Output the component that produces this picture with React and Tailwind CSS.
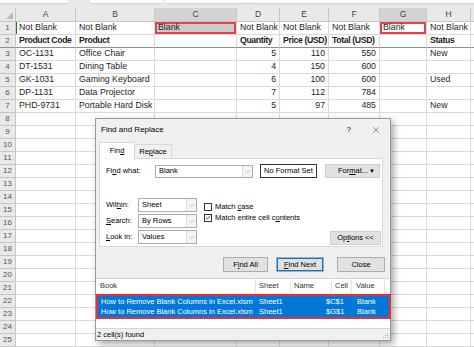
import React from 'react';
import { X, ChevronDown } from 'lucide-react';

const LETTERS = ['A', 'B', 'C', 'D', 'E', 'F', 'G', 'H', ''];

const DATA = [
  ['Not Blank', 'Not Blank', 'Blank', 'Not Blank', 'Not Blank', 'Not Blank', 'Blank', 'Not Blank'],
  ['Product Code', 'Product', '', 'Quantity', 'Price (USD)', 'Total (USD)', '', 'Status'],
  ['OC-1131', 'Office Chair', '', '5', '110', '550', '', 'New'],
  ['DT-1531', 'Dining Table', '', '4', '150', '600', '', ''],
  ['GK-1031', 'Gaming Keyboard', '', '6', '100', '600', '', 'Used'],
  ['DP-1131', 'Data Projector', '', '7', '112', '784', '', ''],
  ['PHD-9731', 'Portable Hard Disk', '', '5', '97', '485', '', 'New'],
];

const rows = Array.from({ length: 25 }, (_, i) => DATA[i] || []);

const Btn = ({ className = '', children }) => (
  <div className={`h-[15px] bg-[#e1e1e1] border border-[#adadad] flex items-center justify-center ${className}`}>
    {children}
  </div>
);

const Select = ({ value }) => (
  <div className="w-[59px] h-[14px] border border-[#abadb3] bg-white flex items-center">
    <span className="pl-[3px] flex-1">{value}</span>
    <div className="w-[10px] h-full border-l border-[#dcdcdc] bg-[#f4f4f4] flex items-center justify-center">
      <ChevronDown size={7} strokeWidth={1.5} color="#777" />
    </div>
  </div>
);

const Check = ({ checked }) => (
  <div className="w-[8px] h-[8px] border border-[#333] bg-white flex items-center justify-center">
    {checked && (
      <svg width="7" height="7" viewBox="0 0 8 8">
        <path d="M1 4.2 L3.1 6.2 L7 1.6" fill="none" stroke="#222" strokeWidth="1" />
      </svg>
    )}
  </div>
);

const Sheet = () => (
  <div className="w-full">
    {/* name box / formula bar remnants */}
    <div className="h-[8px] bg-[#e9e9e9] flex items-start">
      <div className="w-[68px] h-[4px] bg-white border-b border-[#d0d0d0]"></div>
      <div className="w-[73px] h-[4px] bg-white border-b border-[#d0d0d0] ml-[22px]"></div>
      <div className="flex-1 h-[4px] bg-white border-b border-[#d0d0d0] ml-[3px]"></div>
    </div>

    <div className="grid grid-cols-[16px_60px_79px_82px_43px_49px_51px_47px_44px_1fr]">
      {/* column headers */}
      <div className="h-[14px] bg-[#e9e9e9] border-r border-b border-[#c6c6c6] flex items-end justify-end pr-[2px] pb-[2px]">
        <svg width="7" height="7" viewBox="0 0 7 7">
          <path d="M7 0 L7 7 L0 7 Z" fill="#b8b8b8" />
        </svg>
      </div>
      {LETTERS.map((l, i) => (
        <div
          key={i}
          className={`h-[14px] border-r border-b border-[#c6c6c6] flex items-center justify-center text-[8.5px] text-[#444] ${
            l === 'C' || l === 'G' ? 'bg-[#d3d3d3]' : 'bg-[#e9e9e9]'
          }`}
        >
          {l}
        </div>
      ))}

      {rows.map((r, ri) => {
        const rowNum = ri + 1;
        const freeze = rowNum === 2 ? 'border-b-[#8f8f8f]' : '';
        return (
          <React.Fragment key={ri}>
            <div className={`h-[13px] bg-[#e9e9e9] border-r border-b border-[#c6c6c6] flex items-center justify-center text-[8px] text-[#555] ${freeze}`}>
              {rowNum}
            </div>
            {Array.from({ length: 9 }, (_, ci) => {
              const v = r[ci] || '';
              const numeric = ci >= 3 && ci <= 5 && rowNum >= 3;
              const bold = rowNum === 2;
              let extra = '';
              if (rowNum === 1 && ci === 2) extra = 'bg-[#cbcbcb] shadow-[inset_0_0_0_2px_#e8404a]';
              if (rowNum === 1 && ci === 6) extra = 'shadow-[inset_0_0_0_2px_#e8404a]';
              if (rowNum === 1 && ci === 0) extra = 'shadow-[inset_1px_0_0_0_#217346]';
              return (
                <div
                  key={ci}
                  className={`h-[13px] border-r border-b border-[#dadada] flex items-center overflow-hidden whitespace-nowrap text-[8.75px] text-[#1e1e1e] ${
                    numeric ? 'justify-end pr-[3px]' : 'pl-[3px]'
                  } ${bold ? 'font-bold tracking-[-0.4px]' : ''} ${freeze} ${extra}`}
                >
                  {v}
                </div>
              );
            })}
          </React.Fragment>
        );
      })}
    </div>
  </div>
);

const Dialog = () => (
  <div className="absolute left-[95px] top-[118px] w-[296px] h-[223px] bg-[#f0f0f0] border border-[#9a9a9a] shadow-[3px_3px_7px_rgba(0,0,0,0.35)] flex flex-col text-[7.5px] text-black">
    {/* title bar */}
    <div className="h-[22px] shrink-0 flex items-center pl-[5px] pr-[9px]">
      <span className="text-[8px]">Find and Replace</span>
      <span className="ml-auto text-[8px] mr-[20px]">?</span>
      <X size={10} strokeWidth={1.1} color="#222" />
    </div>

    {/* tabs */}
    <div className="h-[17px] shrink-0 flex items-end pl-[3px]">
      <div className="h-[17px] w-[36px] bg-white border border-b-0 border-[#d9d9d9] flex items-center justify-center relative z-10 -mb-px">
        Fin<u>d</u>
      </div>
      <div className="h-[14px] w-[37px] border border-b-0 border-l-0 border-[#d9d9d9] flex items-center justify-center">
        Re<u>p</u>lace
      </div>
    </div>

    {/* find panel */}
    <div className="ml-[3px] w-[284px] h-[89px] shrink-0 bg-white border border-[#d9d9d9] flex flex-col">
      <div className="mt-[5px] h-[14px] flex items-center pl-[6px]">
        <span className="w-[49px]">Fi<u>n</u>d what:</span>
        <div className="w-[98px] h-[13px] border border-[#abadb3] flex items-center">
          <span className="pl-[3px] flex-1">Blank</span>
          <div className="w-[10px] h-full border-l border-[#dcdcdc] bg-[#f4f4f4] flex items-center justify-center">
            <ChevronDown size={7} strokeWidth={1.5} color="#777" />
          </div>
        </div>
        <div className="ml-[7px] w-[57px] h-[14px] border border-[#333] flex items-center justify-center">
          No Format Set
        </div>
        <div className="ml-[8px] w-[55px] h-[14px] bg-[#e1e1e1] border border-[#cfcfcf] flex items-center pl-[12px] pr-[4px]">
          <span>For<u>m</u>at...</span>
          <span className="ml-auto text-[6px]">▼</span>
        </div>
      </div>

      <div className="mt-[20px] flex flex-1">
        <div className="pl-[6px] flex flex-col gap-[2px]">
          <div className="h-[14px] flex items-center">
            <span className="w-[32px]">Wit<u>h</u>in:</span>
            <Select value="Sheet" />
          </div>
          <div className="h-[14px] flex items-center">
            <span className="w-[32px]"><u>S</u>earch:</span>
            <Select value="By Rows" />
          </div>
          <div className="h-[14px] flex items-center">
            <span className="w-[32px]"><u>L</u>ook in:</span>
            <Select value="Values" />
          </div>
        </div>
        <div className="ml-[7px] mt-[3px] flex flex-col">
          <div className="h-[11px] flex items-center gap-[3px]">
            <Check />
            <span>Match <u>c</u>ase</span>
          </div>
          <div className="h-[11px] flex items-center gap-[3px]">
            <Check checked />
            <span>Match entire cell c<u>o</u>ntents</span>
          </div>
        </div>
        <div className="ml-auto self-end mr-[1px] mb-[1px] w-[51px] h-[14px] bg-[#e1e1e1] border border-[#cfcfcf] flex items-center justify-center">
          Op<u>t</u>ions &lt;&lt;
        </div>
      </div>
    </div>

    {/* buttons */}
    <div className="mt-[10px] shrink-0 flex justify-end pr-[5px]">
      <Btn className="w-[45px]">F<u>i</u>nd All</Btn>
      <Btn className="w-[48px] ml-[8px] border-[#0078d7] shadow-[inset_0_0_0_1px_#0078d7]"><u>F</u>ind Next</Btn>
      <Btn className="w-[48px] ml-[13px]">Close</Btn>
    </div>

    {/* results list */}
    <div className="mt-[6px] h-[50px] shrink-0 bg-white border-t border-[#d5d5d5] flex flex-col">
      <div className="h-[15px] flex items-center text-[#333] border-b border-[#eeeeee]">
        <div className="w-[160px] h-full pl-[4px] flex items-center border-r border-[#e5e5e5]">Book</div>
        <div className="w-[35px] h-full pl-[3px] flex items-center border-r border-[#e5e5e5]">Sheet</div>
        <div className="w-[41px] h-full pl-[3px] flex items-center border-r border-[#e5e5e5]">Name</div>
        <div className="w-[20px] h-full pl-[3px] flex items-center border-r border-[#e5e5e5]">Cell</div>
        <div className="w-[33px] h-full pl-[4px] flex items-center border-r border-[#e5e5e5]">Value</div>
      </div>
      <div className="border-2 border-[#e8303a] mr-[-1px]">
        {[
          ['$C$1'],
          ['$G$1'],
        ].map(([cell], i) => (
          <div key={i} className={`${i === 0 ? 'h-[11px]' : 'h-[10px]'} bg-[#0078d7] text-white flex items-center`}>
            <div className="w-[158px] pl-[3px] whitespace-nowrap">How to Remove Blank Columns in Excel.xlsm</div>
            <div className="w-[68px] pl-[3px]">Sheet1</div>
            <div className="w-[31px] pl-[2px]">{cell}</div>
            <div className="pl-[2px]">Blank</div>
          </div>
        ))}
      </div>
    </div>

    {/* status */}
    <div className="h-[12px] shrink-0 flex items-center pl-[1px] border-t border-[#d5d5d5] relative">
      <span>2 cell(s) found</span>
      <svg className="absolute right-[1px] bottom-[1px]" width="7" height="7" viewBox="0 0 7 7">
        <rect x="5" y="1" width="1" height="1" fill="#aaa" />
        <rect x="3" y="3" width="1" height="1" fill="#aaa" />
        <rect x="5" y="3" width="1" height="1" fill="#aaa" />
        <rect x="1" y="5" width="1" height="1" fill="#aaa" />
        <rect x="3" y="5" width="1" height="1" fill="#aaa" />
        <rect x="5" y="5" width="1" height="1" fill="#aaa" />
      </svg>
    </div>
  </div>
);

export default function App() {
  return (
    <div className="relative w-[474px] h-[347px] overflow-hidden bg-white font-['Liberation_Sans',Arial,sans-serif]">
      <Sheet />
      <Dialog />
    </div>
  );
}
